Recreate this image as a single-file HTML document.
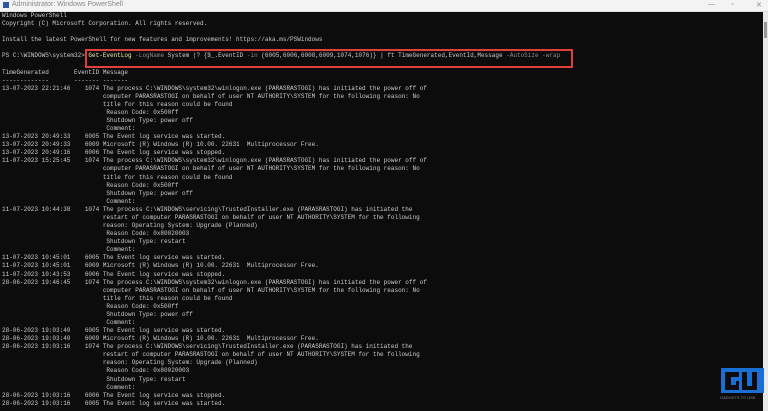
<!DOCTYPE html>
<html><head><meta charset="utf-8"><style>
html,body{margin:0;padding:0;width:768px;height:411px;overflow:hidden;background:#0c0c0c;}
.title{position:absolute;left:0;top:0;width:768px;height:11px;background:#f3f3f3;border-bottom:1px solid #ddd;}
.title span{position:absolute;left:12px;top:1px;font:7px "Liberation Sans",sans-serif;color:#888;}
.title i{position:absolute;left:3px;top:2px;width:6px;height:6px;background:#2a5aa0;}
.ctl{position:absolute;top:1px;font:7px "Liberation Sans",sans-serif;color:#999;}
.sb{position:absolute;right:0;top:12px;width:5px;height:399px;background:#e8e8e8;}
.sb b{position:absolute;left:1px;top:10px;width:3px;height:16px;background:#999;}
pre{position:absolute;left:2px;top:12px;margin:0;font:6px/8.08px "Liberation Mono",monospace;color:#cccccc;}
.y{color:#f9f1a5}.g{color:#8a8a8a}.w{color:#eeeeee}
.box{position:absolute;left:85px;top:49px;width:484px;height:15px;border:2px solid #e0403a;}
.logo{position:absolute;left:721px;top:368px;width:43px;height:25px;background:#1a6fd4;}
.logo2{position:absolute;left:720px;top:395px;font:4px "Liberation Sans",sans-serif;color:#888;}
</style></head><body>
<div class="title"><i></i><span>Administrator: Windows PowerShell</span><span class="ctl" style="left:708px">—</span><span class="ctl" style="left:731px">▫</span><span class="ctl" style="left:756px">✕</span></div>
<pre>Windows PowerShell
Copyright (C) Microsoft Corporation. All rights reserved.

Install the latest PowerShell for new features and improvements! https://aka.ms/PSWindows

PS C:\WINDOWS\system32&gt; <span class="y">Get-EventLog</span> <span class="g">-LogName</span> System |? {$_.EventID <span class="g">-in</span> (6005,6006,6008,6009,1074,1076)} | ft TimeGenerated,EventId,Message <span class="g">-AutoSize -wrap</span>

TimeGenerated       EventID Message
-------------       ------- -------
13-07-2023 22:21:46    1074 The process C:\WINDOWS\system32\winlogon.exe (PARASRASTOGI) has initiated the power off of
                            computer PARASRASTOGI on behalf of user NT AUTHORITY\SYSTEM for the following reason: No
                            title for this reason could be found
                             Reason Code: 0x500ff
                             Shutdown Type: power off
                             Comment:
13-07-2023 20:49:33    6005 The Event log service was started.
13-07-2023 20:49:33    6009 Microsoft (R) Windows (R) 10.00. 22631  Multiprocessor Free.
13-07-2023 20:49:16    6006 The Event log service was stopped.
11-07-2023 15:25:45    1074 The process C:\WINDOWS\system32\winlogon.exe (PARASRASTOGI) has initiated the power off of
                            computer PARASRASTOGI on behalf of user NT AUTHORITY\SYSTEM for the following reason: No
                            title for this reason could be found
                             Reason Code: 0x500ff
                             Shutdown Type: power off
                             Comment:
11-07-2023 10:44:38    1074 The process C:\WINDOWS\servicing\TrustedInstaller.exe (PARASRASTOGI) has initiated the
                            restart of computer PARASRASTOGI on behalf of user NT AUTHORITY\SYSTEM for the following
                            reason: Operating System: Upgrade (Planned)
                             Reason Code: 0x80020003
                             Shutdown Type: restart
                             Comment:
11-07-2023 10:45:01    6005 The Event log service was started.
11-07-2023 10:45:01    6009 Microsoft (R) Windows (R) 10.00. 22631  Multiprocessor Free.
11-07-2023 10:43:53    6006 The Event log service was stopped.
28-06-2023 19:46:45    1074 The process C:\WINDOWS\system32\winlogon.exe (PARASRASTOGI) has initiated the power off of
                            computer PARASRASTOGI on behalf of user NT AUTHORITY\SYSTEM for the following reason: No
                            title for this reason could be found
                             Reason Code: 0x500ff
                             Shutdown Type: power off
                             Comment:
28-06-2023 19:03:40    6005 The Event log service was started.
28-06-2023 19:03:40    6009 Microsoft (R) Windows (R) 10.00. 22631  Multiprocessor Free.
28-06-2023 19:03:16    1074 The process C:\WINDOWS\servicing\TrustedInstaller.exe (PARASRASTOGI) has initiated the
                            restart of computer PARASRASTOGI on behalf of user NT AUTHORITY\SYSTEM for the following
                            reason: Operating System: Upgrade (Planned)
                             Reason Code: 0x80020003
                             Shutdown Type: restart
                             Comment:
28-06-2023 19:03:16    6006 The Event log service was stopped.
28-06-2023 19:03:16    6005 The Event log service was started.</pre>
<div class="box"></div>
<div class="sb"><b></b></div>
<div class="logo"><svg width="43" height="25"><path d="M4 4h14v5h-8v8h5v-4h3v9H4z M21 4h5v14h5V4h5v18H21z" fill="#0c0c0c"/></svg></div>
<div class="logo2">GADGETS TO USE</div>
</body></html>
